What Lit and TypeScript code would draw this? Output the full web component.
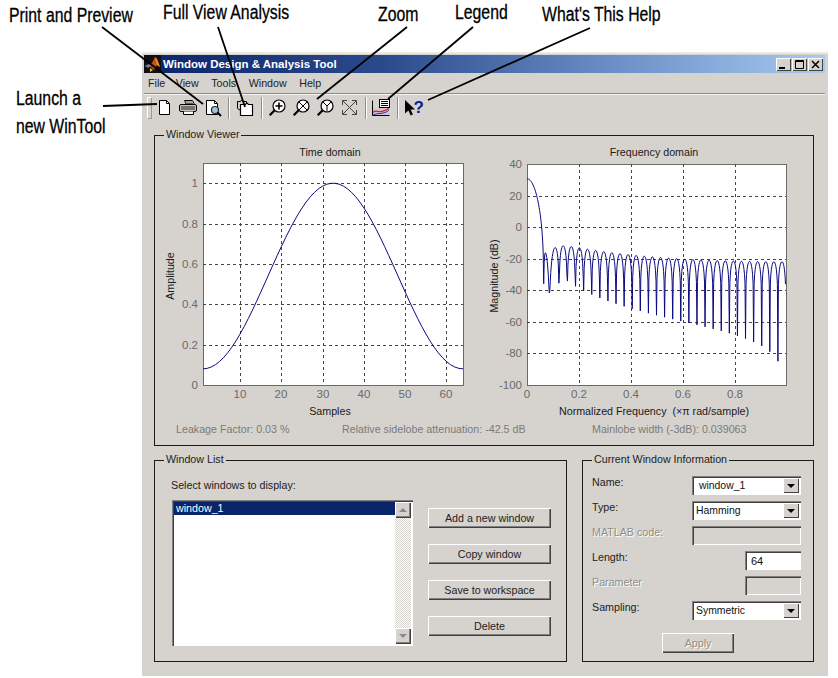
import { LitElement, html, css, svg } from "lit";
import { customElement } from "lit/decorators.js";

type Box = { l: number; t: number; r: number; b: number };

function hamming(): number[] {
  const w: number[] = [];
  for (let n = 0; n < 64; n++) w.push(0.54 - 0.46 * Math.cos((2 * Math.PI * n) / 63));
  return w;
}

function timePoints(box: Box): string {
  const sx = (box.r - box.l) / 63;
  const sy = (box.b - box.t) / 1.1;
  return hamming()
    .map((v, i) => `${(box.l + i * sx).toFixed(2)},${(box.b - v * sy).toFixed(2)}`)
    .join(" ");
}

function freqPoints(box: Box): string {
  const win = hamming();
  const pts: string[] = [];
  const sx = box.r - box.l;
  const sy = (box.b - box.t) / 140;
  for (let k = 0; k < 512; k++) {
    const w = (Math.PI * k) / 512;
    let re = 0;
    let im = 0;
    win.forEach((v, n) => {
      re += v * Math.cos(w * n);
      im -= v * Math.sin(w * n);
    });
    const db = 20 * Math.log10(Math.max(Math.hypot(re, im), 1e-6));
    pts.push(`${(box.l + (k / 512) * sx).toFixed(2)},${(box.t + (40 - db) * sy).toFixed(2)}`);
  }
  return pts.join(" ");
}

function plot(o: {
  w: number;
  h: number;
  box: Box;
  title: string;
  xlabel: string;
  ylabel: string;
  ylabelX: number;
  xticks: [string, number][];
  yticks: [string, number][];
  points: string;
  cx: number;
}) {
  const { box } = o;
  const cy = 134;
  return html`<svg class="plot" width=${o.w} height=${o.h} viewBox="0 0 ${o.w} ${o.h}">
    <rect x=${box.l + 0.5} y=${box.t + 0.5} width=${box.r - box.l} height=${box.b - box.t} fill="#fff" stroke="#6a6a6a" shape-rendering="crispEdges"></rect>
    ${o.xticks
      .filter((t) => t[1] > box.l + 1)
      .map((t) => svg`<line x1=${t[1] + 0.5} x2=${t[1] + 0.5} y1=${box.t} y2=${box.b} class="grid"></line>`)}
    ${o.yticks
      .filter((t) => t[1] > box.t + 1 && t[1] < box.b - 1)
      .map((t) => svg`<line x1=${box.l} x2=${box.r} y1=${t[1] + 0.5} y2=${t[1] + 0.5} class="grid"></line>`)}
    <polyline points=${o.points} class="curve"></polyline>
    ${o.xticks.map((t) => svg`<text x=${t[1]} y=${box.b + 13} text-anchor="middle" class="tick">${t[0]}</text>`)}
    ${o.yticks.map((t) => svg`<text x=${box.l - 5} y=${t[1] + 4} text-anchor="end" class="tick">${t[0]}</text>`)}
    <text x=${o.cx} y="14" text-anchor="middle" class="lbl">${o.title}</text>
    <text x=${o.cx} y=${box.b + 30} text-anchor="middle" class="lbl">${o.xlabel}</text>
    <text transform="translate(${o.ylabelX} ${cy}) rotate(-90)" text-anchor="middle" class="lbl">${o.ylabel}</text>
  </svg>`;
}

const icons = {
  doc: svg`<path d="M6.500 3.500h7l3 3v11h-10z" fill="#fff" stroke="#000"/><path d="M13.500 3.500v3h3" fill="none" stroke="#000"/>`,
  print: svg`<path d="M7.500 3.500h8l2 4h-8z" fill="#fff" stroke="#000"/><path d="M8 6.500h8M8.600 5h7" stroke="#555"/><rect x="2.500" y="7.500" width="17" height="7" rx="1.500" fill="#c8c4bc" stroke="#000"/><path d="M4 10h14M4 12h14" stroke="#222"/><path d="M6.500 14.500v3h10v-3" fill="#fff" stroke="#000"/>`,
  preview: svg`<path d="M5.500 3.500h8l3 3v11h-11z" fill="#fff" stroke="#000"/><path d="M13.500 3.500v3h3" fill="none" stroke="#000"/><circle cx="14" cy="13" r="3.500" fill="#9fc6e0" stroke="#222" stroke-width="1.200"/><path d="M16.500 15.500l3.500 3.500" stroke="#000" stroke-width="2"/>`,
  full: svg`<path d="M3.500 11.500v-7h3l1-1.500 2 1.500h3v3" fill="none" stroke="#000"/><path d="M3.500 11.500l3 2" stroke="#000"/><path d="M6.500 7.500h5l1.500-1.500 1.500 1.500h4v11h-12z" fill="#fff" stroke="#000" stroke-width="1.200"/>`,
  zoomIn: svg`<circle cx="12" cy="9" r="6" fill="#fff" stroke="#000" stroke-width="1.200"/><path d="M7.700 13.300l-5 5" stroke="#000" stroke-width="2.200"/><path d="M12 5.500v7M8.500 9h7" stroke="#000" stroke-width="1.600"/>`,
  zoomX: svg`<circle cx="12" cy="9" r="6" fill="#fff" stroke="#000" stroke-width="1.200"/><path d="M7.700 13.300l-5 5" stroke="#000" stroke-width="2.200"/><path d="M8 5l8 8M16 5l-8 8" stroke="#000"/>`,
  zoomY: svg`<circle cx="12" cy="9" r="6" fill="#fff" stroke="#000" stroke-width="1.200"/><path d="M7.700 13.300l-5 5" stroke="#000" stroke-width="2.200"/><path d="M8 5l4 4 4-4M12 9v5.500" fill="none" stroke="#000"/>`,
  fit: svg`<path d="M4 4l13 13M17 4L4 17" stroke="#444" fill="none"/><path d="M3.500 8V3.500H8M13 3.500h4.500V8M3.500 13v4.500H8M13 17.500h4.500V13" fill="none" stroke="#444"/>`,
  legend: svg`<path d="M2.500 3.500v15h17" fill="none" stroke="#000"/><path d="M3 11h16v7H3z" fill="#d8a8c8" opacity=".35"/><path d="M3 15.500c3-3 5 0 8-1s5-1 8-3" fill="none" stroke="#d02020" stroke-width="1.300"/><path d="M3 18c4-2 7-1 10-2s4-1 6-3" fill="none" stroke="#2030c0"/><rect x="9.500" y="2.500" width="10" height="8" fill="#fff" stroke="#000"/><path d="M11 4.500h7M11 6.500h7M11 8.500h7" stroke="#000"/>`,
  what: svg`<path d="M2 3v13.500l3.400-3 2.300 5 2.200-1-2.300-5h4.400z" fill="#000"/><text x="10.500" y="15.500" class="q">?</text>`,
};

const ic = (p: unknown) => html`<span class="tb"><svg width="22" height="22" viewBox="0 0 22 22">${p}</svg></span>`;

@customElement("app-root")
export class AppRoot extends LitElement {
  static styles = css`
    :host { display: block; width: 838px; height: 678px; position: relative; overflow: hidden; background: #fff;
      font-family: "Liberation Sans", Arial, sans-serif; font-size: 10.700px; color: #111; }
    .page { padding: 52px 0 0 142px; }
    .win { width: 686px; height: 624px; box-sizing: border-box; background: #d6d3ce; padding: 3px 3px 0 2px;
      box-shadow: inset 0 1px 0 #ecebe6, inset 0 2px 0 #e8e6e0; display: flex; flex-direction: column; }
    .title { height: 18px; flex: none; display: flex; align-items: center; background: linear-gradient(90deg, #0a246a 0%, #2b4a8c 35%, #6d91c8 70%, #a6caf0 100%); color: #fff; font-weight: 700; font-size: 11.500px; }
    .logo { width: 17px; height: 18px; flex: none; margin-right: 2px; display: block; }
    .caps { margin-left: auto; display: flex; gap: 1px; padding-right: 2px; }
    .cap { width: 15px; height: 13px; background: #d6d3ce; display: block; box-shadow: inset 1px 1px 0 #fff, inset -1px -1px 0 #404040; }
    .menu { height: 20px; flex: none; display: flex; align-items: center; gap: 12.500px; padding-left: 4px; font-size: 10.700px; color: #222; border-bottom: 1px solid #8f8d88; box-sizing: content-box; }
    .menu span:first-child { margin-right: -2px; }
    .tools { height: 25px; flex: none; display: flex; align-items: center; border-top: 1px solid #f4f3ef; padding-left: 3px; }
    .grip { width: 3px; height: 20px; flex: none; border: 1px solid #999; border-left-color: #fff; border-top-color: #fff; background: #d6d3ce; }
    .tb { width: 24px; height: 24px; display: flex; align-items: center; justify-content: center; flex: none; }
    .sep { width: 1px; height: 22px; background: #8f8d88; box-shadow: 1px 0 0 #fff; margin: 0 4px; flex: none; }
    .sep.tight { margin: 0 3px; }
    .body { padding: 8px 0 0 10px; display: flex; flex-direction: column; gap: 7px; }
    fieldset { margin: 0; padding: 0; border: 1px solid #1a1a1a; box-sizing: border-box; min-width: 0; }
    legend { margin-left: 9px; padding: 0 2px; height: 14px; line-height: 13px; color: #222; }
    .viewer { width: 660px; height: 318px; }
    .plots { display: flex; }
    .plot { display: block; flex: none; }
    .plot text { font-family: "Liberation Sans", Arial, sans-serif; font-size: 10.700px; }
    .plot .tick { fill: #6a6a6a; font-size: 11.500px; }
    .plot .lbl { fill: #1a1a1a; }
    .grid { stroke: #444; stroke-dasharray: 3 3; shape-rendering: crispEdges; }
    .curve { fill: none; stroke: #0a0a80; stroke-width: 1; stroke-linejoin: round; }
    .stats { display: grid; grid-template-columns: 166px 250px auto; padding-left: 21px; color: #7a7a7a; line-height: 14px; }
    .bottom { display: flex; gap: 15px; }
    .list { width: 413px; height: 209px; }
    .list-in { padding-left: 16px; }
    .select-label { padding-top: 12px; line-height: 13px; margin-bottom: 8px; color: #222; }
    .list-row { display: flex; gap: 15px; padding-left: 1px; }
    .listbox { width: 241px; height: 146px; flex: none; box-sizing: border-box; background: #fff; padding: 2px; display: flex;
      box-shadow: inset 1px 1px 0 #808080, inset 2px 2px 0 #404040, inset -1px -1px 0 #fff; }
    .items { flex: 1; }
    .item { height: 13px; line-height: 13px; background: #0a246a; color: #fff; padding-left: 2px; }
    .sb { width: 16px; display: flex; flex-direction: column; justify-content: space-between; background: repeating-conic-gradient(#d6d3ce 0 25%, #fff 0 50%) 0 0 / 2px 2px; }
    .sb-btn { height: 16px; background: #d6d3ce; display: flex; align-items: center; justify-content: center; box-shadow: inset 1px 1px 0 #fff, inset -1px -1px 0 #404040, inset -2px -2px 0 #808080; }
    .tri-u { width: 0; height: 0; border: 4px solid transparent; border-top: 0; border-bottom-color: #8a8a8a; }
    .tri-d { width: 0; height: 0; border: 4px solid transparent; border-bottom: 0; border-top-color: #8a8a8a; }
    .btns { display: flex; flex-direction: column; gap: 16px; padding-top: 8px; }
    .btn { width: 123px; height: 20px; box-sizing: border-box; display: flex; align-items: center; justify-content: center; background: #d6d3ce; color: #222;
      box-shadow: inset 1px 1px 0 #fff, inset -1px -1px 0 #404040, inset -2px -2px 0 #808080; }
    .info { width: 232px; height: 209px; }
    .info-in { padding: 9px 0 0 9px; }
    .form { display: grid; grid-template-columns: 100px 109px; grid-auto-rows: 19px; row-gap: 6px; }
    .form label { line-height: 13px; color: #222; }
    .form label.off { color: #8f8d88; text-shadow: 1px 1px 0 #fff; }
    .sel, .inp { box-sizing: border-box; height: 19px; display: flex; align-items: center; box-shadow: inset 1px 1px 0 #808080, inset 2px 2px 0 #404040, inset -1px -1px 0 #fff; }
    .sel { background: #fff; padding-left: 4px; padding-right: 2px; justify-content: space-between; font-size: 10.400px; }
    .sel.name { padding-left: 7px; }
    .drop { width: 16px; height: 15px; background: #d6d3ce; display: flex; align-items: center; justify-content: center; box-shadow: inset 1px 1px 0 #fff, inset -1px -1px 0 #404040; }
    .drop i { width: 0; height: 0; border: 4px solid transparent; border-bottom: 0; border-top-color: #000; }
    .inp.off { background: #d6d3ce; }
    .inp.short { width: 56px; justify-self: end; }
    .inp.on { background: #fff; padding-left: 6px; font-size: 11px; }
    .apply { width: 72px; height: 20px; margin: 13px 0 0 70px; display: flex; align-items: center; justify-content: center; background: #d6d3ce; color: #8f8d88; text-shadow: 1px 1px 0 #fff;
      box-shadow: inset 1px 1px 0 #fff, inset -1px -1px 0 #404040, inset -2px -2px 0 #808080; }
    .notes { position: absolute; inset: 0; pointer-events: none; }
    .note { position: absolute; font-family: "Liberation Sans", sans-serif; font-size: 20px; line-height: 24px; color: #000; white-space: nowrap; transform: scaleX(0.79); transform-origin: left center; -webkit-text-stroke: 0.3px #000; }
    .lines { position: absolute; inset: 0; }
    .lines line { stroke: #000; stroke-width: 1.800; }
    .q { font-family: "Liberation Sans", sans-serif; font-weight: 700; font-size: 17px; fill: #0a1a90; }
  `;

  render() {
    const L: Box = { l: 48, t: 21, r: 308, b: 243 };
    const R: Box = { l: 47, t: 22, r: 306, b: 243 };
    const xL = (v: number) => Math.round(L.l + ((v - 1) / 63) * (L.r - L.l));
    const yL = (v: number) => Math.round(L.b - (v / 1.1) * (L.b - L.t));
    const yR = (v: number) => Math.round(R.t + ((40 - v) / 140) * (R.b - R.t));
    const xR = (v: number) => Math.round(R.l + v * 260);
    return html`
      <div class="page">
        <div class="win">
          <div class="title">
            <svg class="logo" viewBox="0 0 17 18">
              <rect width="17" height="18" fill="#101010"></rect>
              <path d="M1 11l4-2 3-1 3-6 2 2 3 8-3-2-3 5-3-3z" fill="#c8501a"></path>
              <path d="M11 2l2 2 3 8-3-2z" fill="#e89020"></path>
              <path d="M1 11l4-2 2 2-3 2z" fill="#6a7ab0"></path>
              <path d="M6 13l3 2-3 2z" fill="#f0c020"></path>
            </svg>
            <span>Window Design &amp; Analysis Tool</span>
            <div class="caps">
              <svg class="cap" viewBox="0 0 15 13"><path d="M3 10h6" stroke="#000" stroke-width="2"></path></svg>
              <svg class="cap" viewBox="0 0 15 13"><path d="M3.500 2.500h8v8h-8z M3 3.500h9" fill="none" stroke="#000"></path></svg>
              <svg class="cap" viewBox="0 0 15 13"><path d="M4 3l7 7M11 3l-7 7" stroke="#000" stroke-width="1.500"></path></svg>
            </div>
          </div>
          <div class="menu"><span>File</span><span>View</span><span>Tools</span><span>Window</span><span>Help</span></div>
          <div class="tools">
            <span class="grip"></span>
            ${ic(icons.doc)}${ic(icons.print)}${ic(icons.preview)}
            <span class="sep"></span>
            ${ic(icons.full)}
            <span class="sep"></span>
            ${ic(icons.zoomIn)}${ic(icons.zoomX)}${ic(icons.zoomY)}${ic(icons.fit)}
            <span class="sep tight"></span>
            ${ic(icons.legend)}
            <span class="sep"></span>
            ${ic(icons.what)}
          </div>
          <div class="body">
            <fieldset class="viewer">
              <legend>Window Viewer</legend>
              <div class="plots">
                ${plot({
                  w: 325, h: 280, box: L, title: "Time domain", xlabel: "Samples", ylabel: "Amplitude", ylabelX: 19, cx: 175,
                  xticks: [10, 20, 30, 40, 50, 60].map((v) => [String(v), xL(v)] as [string, number]),
                  yticks: [["0", 0], ["0.2", 0.2], ["0.4", 0.4], ["0.6", 0.6], ["0.8", 0.8], ["1", 1]].map((t) => [t[0], yL(t[1] as number)] as [string, number]),
                  points: timePoints(L),
                })}
                ${plot({
                  w: 333, h: 280, box: R, title: "Frequency domain", xlabel: "Normalized Frequency\u00a0\u00a0(\u00d7\u03c0 rad/sample)", ylabel: "Magnitude (dB)", ylabelX: 18, cx: 174,
                  xticks: [["0", 0], ["0.2", 0.2], ["0.4", 0.4], ["0.6", 0.6], ["0.8", 0.8]].map((t) => [t[0], xR(t[1] as number)] as [string, number]),
                  yticks: [40, 20, 0, -20, -40, -60, -80, -100].map((v) => [String(v), yR(v)] as [string, number]),
                  points: freqPoints(R),
                })}
              </div>
              <div class="stats">
                <span>Leakage Factor: 0.03 %</span>
                <span>Relative sidelobe attenuation: -42.5 dB</span>
                <span>Mainlobe width (-3dB): 0.039063</span>
              </div>
            </fieldset>
            <div class="bottom">
              <fieldset class="list">
                <legend>Window List</legend>
                <div class="list-in">
                  <div class="select-label">Select windows to display:</div>
                  <div class="list-row">
                    <div class="listbox">
                      <div class="items"><div class="item">window_1</div></div>
                      <div class="sb">
                        <div class="sb-btn"><i class="tri-u"></i></div>
                        <div class="sb-btn"><i class="tri-d"></i></div>
                      </div>
                    </div>
                    <div class="btns">
                      <div class="btn">Add a new window</div>
                      <div class="btn">Copy window</div>
                      <div class="btn">Save to workspace</div>
                      <div class="btn">Delete</div>
                    </div>
                  </div>
                </div>
              </fieldset>
              <fieldset class="info">
                <legend>Current Window Information</legend>
                <div class="info-in">
                  <div class="form">
                    <label>Name:</label>
                    <div class="sel name"><span>window_1</span><span class="drop"><i></i></span></div>
                    <label>Type:</label>
                    <div class="sel"><span>Hamming</span><span class="drop"><i></i></span></div>
                    <label class="off">MATLAB code:</label>
                    <div class="inp off"></div>
                    <label>Length:</label>
                    <div class="inp short on">64</div>
                    <label class="off">Parameter</label>
                    <div class="inp short off"></div>
                    <label>Sampling:</label>
                    <div class="sel"><span>Symmetric</span><span class="drop"><i></i></span></div>
                  </div>
                  <div class="apply">Apply</div>
                </div>
              </fieldset>
            </div>
          </div>
        </div>
      </div>
      <div class="notes">
        <svg class="lines" width="838" height="678">
          <line x1="102" y1="27" x2="203" y2="104"></line>
          <line x1="218" y1="27" x2="245" y2="107"></line>
          <line x1="407" y1="27" x2="317" y2="99"></line>
          <line x1="473" y1="27" x2="388" y2="99"></line>
          <line x1="590" y1="28" x2="428" y2="100"></line>
          <line x1="103" y1="106" x2="157" y2="104"></line>
        </svg>
        <div class="note" style="left:9px;top:3px">Print and Preview</div>
        <div class="note" style="left:163px;top:0px">Full View Analysis</div>
        <div class="note" style="left:378px;top:2px">Zoom</div>
        <div class="note" style="left:455px;top:0px">Legend</div>
        <div class="note" style="left:542px;top:2px">What's This Help</div>
        <div class="note" style="left:16px;top:86px">Launch a</div>
        <div class="note" style="left:16px;top:114px">new WinTool</div>
      </div>
    `;
  }
}
